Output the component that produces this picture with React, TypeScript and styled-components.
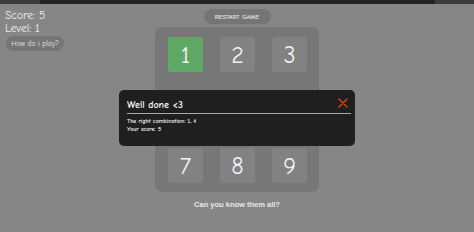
import React from 'react';
import styled, { createGlobalStyle } from 'styled-components';

const GlobalStyle = createGlobalStyle`
  html, body {
    margin: 0;
    padding: 0;
    background: #878687;
  }
`;

const comic = `"Comic Sans MS", "Comic Neue", "DejaVu Sans", sans-serif`;

const Page = styled.div`
  position: relative;
  width: 474px;
  height: 232px;
  background: #878687;
  overflow: hidden;
  font-family: ${comic};
`;

const TopStrip = styled.div`
  height: 4px;
  background: linear-gradient(90deg, #3b3b3f 0, #3b3b3f 40px, #232326 40px, #232326 435px, #3b3b3f 435px);
`;

const Layout = styled.div`
  display: grid;
  grid-template-columns: 1fr auto 1fr;
  padding-top: 5px;
`;

const Info = styled.div`
  display: flex;
  flex-direction: column;
  align-items: flex-start;
  padding-left: 5px;
`;

const Stat = styled.div`
  color: #f0f0f0;
  font-size: 11.5px;
  line-height: 13px;
  font-weight: 500;
`;

const Pill = styled.button`
  border: none;
  background: #767576;
  color: #e6e6e6;
  font-family: ${comic};
  border-radius: 999px;
  cursor: pointer;
  padding: 0;
`;

const HelpButton = styled(Pill)`
  margin-top: 1px;
  margin-left: 1px;
  width: 58px;
  height: 15px;
  font-size: 7.5px;
`;

const Center = styled.div`
  display: flex;
  flex-direction: column;
  align-items: center;
`;

const RestartButton = styled(Pill)`
  width: 67px;
  height: 15px;
  font-size: 6.5px;
  font-weight: bold;
  text-transform: uppercase;
`;

const Board = styled.div`
  margin-top: 3px;
  width: 138px;
  display: grid;
  grid-template-columns: repeat(3, 35px);
  column-gap: 17px;
  row-gap: 20.5px;
  padding: 10px 13px 9px;
  background: #787778;
  border-radius: 7px;
`;

const Tile = styled.div<{ $lit?: boolean }>`
  width: 35px;
  height: 35px;
  border-radius: 3px;
  background: ${(p) => (p.$lit ? '#5ea965' : '#838283')};
  color: #f2f2f2;
  display: flex;
  align-items: center;
  justify-content: center;
  font-family: ${comic};
  font-size: 24px;
`;

const Hint = styled.div`
  margin-top: 8px;
  color: #e8e8e8;
  font-family: "Liberation Sans", Arial, sans-serif;
  font-weight: bold;
  font-size: 7.5px;
`;

const Modal = styled.div`
  position: absolute;
  left: 119px;
  top: 90px;
  width: 236px;
  height: 56px;
  box-sizing: border-box;
  padding: 8px 4px 0 8px;
  background: #1f1f1f;
  border-radius: 5px;
  color: #f4f4f4;
`;

const ModalHead = styled.div`
  display: flex;
  justify-content: space-between;
  align-items: center;
  height: 14px;
  padding-bottom: 1px;
  border-bottom: 1px solid #a9a9a9;
`;

const ModalTitle = styled.div`
  font-weight: bold;
  font-size: 10px;
`;

const Close = styled.svg`
  width: 10px;
  height: 10px;
  margin-right: 3px;
  margin-top: -4px;
`;

const ModalBody = styled.div`
  padding-top: 4px;
  font-size: 6px;
  line-height: 8px;
  font-weight: 600;
`;

const tiles = [1, 2, 3, 4, 5, 6, 7, 8, 9];

export default function App() {
  return (
    <>
      <GlobalStyle />
      <Page>
        <TopStrip />
        <Layout>
          <Info>
            <Stat>Score: 5</Stat>
            <Stat>Level: 1</Stat>
            <HelpButton>How do i play?</HelpButton>
          </Info>
          <Center>
            <RestartButton>Restart game</RestartButton>
            <Board>
              {tiles.map((n) => (
                <Tile key={n} $lit={n === 1}>
                  {n}
                </Tile>
              ))}
            </Board>
            <Hint>Can you know them all?</Hint>
          </Center>
          <div />
        </Layout>
        <Modal>
          <ModalHead>
            <ModalTitle>Well done &lt;3</ModalTitle>
            <Close viewBox="0 0 10 10">
              <path d="M1 1 L9 9 M9 1 L1 9" stroke="#e0401f" strokeWidth="1.4" strokeLinecap="round" />
            </Close>
          </ModalHead>
          <ModalBody>
            <div>The right combination: 1, 4</div>
            <div>Your score: 5</div>
          </ModalBody>
        </Modal>
      </Page>
    </>
  );
}
